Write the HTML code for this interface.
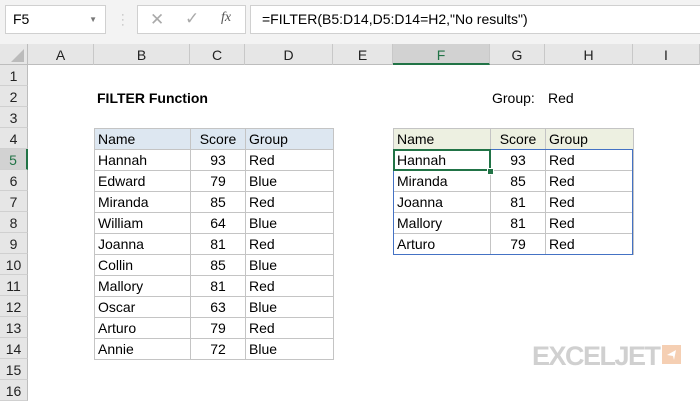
<!DOCTYPE html>
<html><head><style>
body{margin:0;width:700px;height:400px;overflow:hidden;background:#fff;font-family:"Liberation Sans",sans-serif;position:relative}
.a{position:absolute}
table{border-collapse:collapse;position:absolute;font-size:14px;table-layout:fixed}
td{border:1px solid #c4c4c4;height:21px;padding:0 3px;box-sizing:border-box;white-space:nowrap;line-height:20px}
td.n{text-align:center}
.ch{position:absolute;top:44px;height:21px;line-height:23px;text-align:center;font-size:14px;border-right:1px solid #c8c8c8;box-sizing:border-box;color:#222}
.rh{position:absolute;left:0;width:28px;height:21px;line-height:22px;text-align:center;font-size:14px;border-bottom:1px solid #d0d0d0;box-sizing:border-box;color:#222;border-right:1px solid #bdbdbd}
</style></head><body>
<div class="a" style="left:0;top:0;width:700px;height:44px;background:#f3f3f3;border-bottom:1px solid #d4d4d4"></div>
<div class="a" style="left:5px;top:5px;width:101px;height:29px;background:#fff;border:1px solid #d0d0d0;box-sizing:border-box;font-size:14px;line-height:27px;padding-left:7px">F5<span style="position:absolute;right:8px;top:0;font-size:8px;color:#777">▼</span></div>
<div class="a" style="left:121px;top:13px;color:#aaa;font-size:11px;line-height:5px">·<br>·<br>·</div>
<div class="a" style="left:137px;top:5px;width:109px;height:29px;background:#fff;border:1px solid #d0d0d0;box-sizing:border-box"></div>
<div class="a" style="left:150px;top:10px;color:#aaa;font-size:17px">✕</div>
<div class="a" style="left:185px;top:9px;color:#aaa;font-size:17px">✓</div>
<div class="a" style="left:221px;top:10px;color:#555;font-size:14px;font-style:italic;font-family:'Liberation Serif',serif">fx</div>
<div class="a" style="left:250px;top:5px;width:450px;height:29px;background:#fff;border:1px solid #d0d0d0;border-right:none;box-sizing:border-box;font-size:14px;line-height:27px;padding-left:11px">=FILTER(B5:D14,D5:D14=H2,"No results")</div>
<div class="a" style="left:0;top:44px;width:700px;height:21px;background:#e6e6e6;border-bottom:1px solid #bdbdbd;box-sizing:border-box"></div>
<div class="a" style="left:0;top:44px;width:28px;height:21px;border-right:1px solid #bdbdbd;box-sizing:border-box"><div style="position:absolute;right:3px;bottom:3px;width:0;height:0;border-left:13px solid transparent;border-bottom:13px solid #bbb"></div></div>
<div class="ch" style="left:28px;width:66px">A</div>
<div class="ch" style="left:94px;width:96px">B</div>
<div class="ch" style="left:190px;width:55px">C</div>
<div class="ch" style="left:245px;width:88px">D</div>
<div class="ch" style="left:333px;width:60px">E</div>
<div class="ch" style="left:393px;width:97px;background:#d2d2d2;border-bottom:2px solid #217346;color:#217346">F</div>
<div class="ch" style="left:490px;width:55px">G</div>
<div class="ch" style="left:545px;width:88px">H</div>
<div class="ch" style="left:633px;width:67px">I</div>
<div class="a" style="left:0;top:65px;width:28px;height:335px;background:#e6e6e6"></div>
<div class="rh" style="top:65px">1</div><div class="rh" style="top:86px">2</div><div class="rh" style="top:107px">3</div><div class="rh" style="top:128px">4</div>
<div class="rh" style="top:149px;background:#d2d2d2;color:#217346;border-right:2px solid #217346">5</div>
<div class="rh" style="top:170px">6</div><div class="rh" style="top:191px">7</div><div class="rh" style="top:212px">8</div><div class="rh" style="top:233px">9</div><div class="rh" style="top:254px">10</div><div class="rh" style="top:275px">11</div><div class="rh" style="top:296px">12</div><div class="rh" style="top:317px">13</div><div class="rh" style="top:338px">14</div><div class="rh" style="top:359px">15</div><div class="rh" style="top:380px">16</div>
<div class="a" style="left:97px;top:90px;font-size:14px;font-weight:bold">FILTER Function</div>
<div class="a" style="left:492px;top:90px;font-size:14px">Group:</div>
<div class="a" style="left:548px;top:90px;font-size:14px">Red</div>
<table style="left:94px;top:128px;width:239px">
<colgroup><col style="width:96px"><col style="width:55px"><col style="width:88px"></colgroup>
<tr style="background:#dde7f1"><td>Name</td><td class="n">Score</td><td>Group</td></tr>
<tr><td>Hannah</td><td class="n">93</td><td>Red</td></tr>
<tr><td>Edward</td><td class="n">79</td><td>Blue</td></tr>
<tr><td>Miranda</td><td class="n">85</td><td>Red</td></tr>
<tr><td>William</td><td class="n">64</td><td>Blue</td></tr>
<tr><td>Joanna</td><td class="n">81</td><td>Red</td></tr>
<tr><td>Collin</td><td class="n">85</td><td>Blue</td></tr>
<tr><td>Mallory</td><td class="n">81</td><td>Red</td></tr>
<tr><td>Oscar</td><td class="n">63</td><td>Blue</td></tr>
<tr><td>Arturo</td><td class="n">79</td><td>Red</td></tr>
<tr><td>Annie</td><td class="n">72</td><td>Blue</td></tr>
</table>
<table style="left:393px;top:128px;width:240px">
<colgroup><col style="width:97px"><col style="width:55px"><col style="width:88px"></colgroup>
<tr style="background:#edf0e1"><td>Name</td><td class="n">Score</td><td>Group</td></tr>
<tr><td>Hannah</td><td class="n">93</td><td>Red</td></tr>
<tr><td>Miranda</td><td class="n">85</td><td>Red</td></tr>
<tr><td>Joanna</td><td class="n">81</td><td>Red</td></tr>
<tr><td>Mallory</td><td class="n">81</td><td>Red</td></tr>
<tr><td>Arturo</td><td class="n">79</td><td>Red</td></tr>
</table>
<div class="a" style="left:393px;top:149px;width:240px;height:106px;border:1px solid #4472c4;box-sizing:border-box"></div>
<div class="a" style="left:393px;top:149px;width:98px;height:22px;border:2px solid #217346;box-sizing:border-box"></div>
<div class="a" style="left:487px;top:168px;width:5px;height:5px;background:#217346;border:1px solid #fff"></div>
<div class="a" style="left:532px;top:341px;font-size:27px;font-weight:bold;color:#d0d0d0;letter-spacing:-1.5px">EXCELJET</div>
<div class="a" style="left:662px;top:345px;width:19px;height:19px;background:#f5cfb3"><svg width="19" height="19"><path d="M14 5 L5 10 L11 11 L12 15 Z" fill="#fff"/></svg></div>
</body></html>
